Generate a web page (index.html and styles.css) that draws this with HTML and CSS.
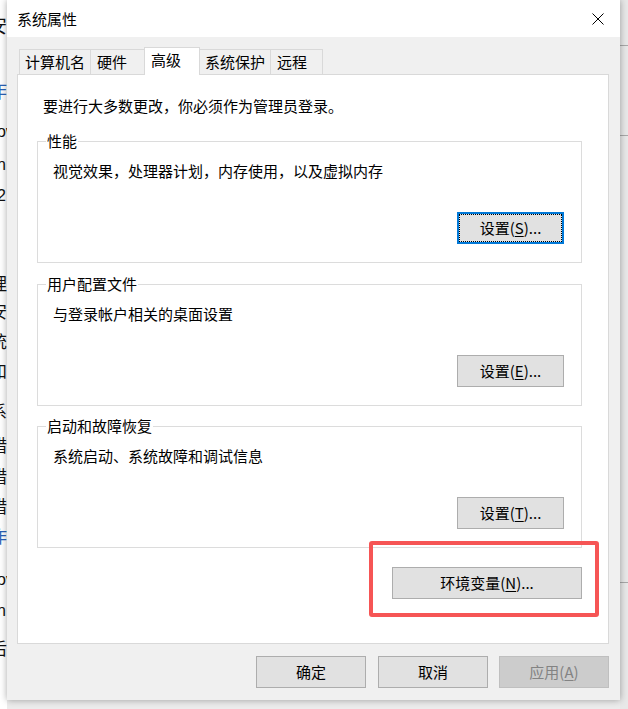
FILE: index.html
```html
<!DOCTYPE html>
<html lang="zh-CN">
<head>
<meta charset="utf-8">
<title>系统属性</title>
<link rel="stylesheet" href="styles.css">
</head>
<body>
<div class="screen">
  <div class="bgwin">
    <div class="frag f1 big">安</div>
    <div class="frag f2 big blue">作</div>
    <div class="frag f3 lat">ow</div>
    <div class="frag f4 lat">n</div>
    <div class="frag f5 lat">2</div>
    <div class="frag f6">理</div>
    <div class="frag f7">安</div>
    <div class="frag f8">统</div>
    <div class="frag f9">和</div>
    <div class="frag f10">系</div>
    <div class="frag f11">措</div>
    <div class="frag f12">措</div>
    <div class="frag f13">措</div>
    <div class="frag f14 blue">作</div>
    <div class="frag f15 lat">ov</div>
    <div class="frag f16 lat">n</div>
    <div class="frag f17">后</div>
  </div>

  <div class="dialog">
    <div class="titlebar">
      <span class="title">系统属性</span>
      <svg class="close" width="12" height="12" viewBox="0 0 12 12" aria-hidden="true">
        <path d="M0.5 0.5L11.5 11.5M11.5 0.5L0.5 11.5" stroke="#000" stroke-width="1" fill="none"/>
      </svg>
    </div>
    <div class="body">
      <div class="tabs">
        <div class="tab t1">计算机名</div>
        <div class="tab t2">硬件</div>
        <div class="tab sel">高级</div>
        <div class="tab t4">系统保护</div>
        <div class="tab t5">远程</div>
      </div>
      <div class="panel">
        <p class="intro">要进行大多数更改，你必须作为管理员登录。</p>

        <div class="group g1">
          <div class="legend">性能</div>
          <div class="desc">视觉效果，处理器计划，内存使用，以及虚拟内存</div>
          <div class="grow"><button class="btn focus">设置(<u>S</u>)...</button></div>
        </div>

        <div class="group">
          <div class="legend">用户配置文件</div>
          <div class="desc">与登录帐户相关的桌面设置</div>
          <div class="grow"><button class="btn">设置(<u>E</u>)...</button></div>
        </div>

        <div class="group g3">
          <div class="legend">启动和故障恢复</div>
          <div class="desc">系统启动、系统故障和调试信息</div>
          <div class="grow"><button class="btn">设置(<u>T</u>)...</button></div>
        </div>

        <div class="envrow"><button class="btn env">环境变量(<u>N</u>)...</button></div>
      </div>
      <div class="actions">
        <button class="btn act">确定</button>
        <button class="btn act a2">取消</button>
        <button class="btn act a3 disabled">应用(<u>A</u>)</button>
      </div>
    </div>
  </div>

  <div class="rstrip">
    <div class="rl r1"></div>
    <div class="rl r2"></div>
    <div class="rl r3"></div>
  </div>

  <div class="annot"></div>
</div>
</body>
</html>
```

FILE: styles.css
```css
* { box-sizing: border-box; }

html, body {
  margin: 0;
  padding: 0;
  background: #ececec;
}

body {
  font-family: "Noto Sans CJK SC", "Noto Sans", sans-serif;
  font-size: 15px;
  color: #000;
}

.screen {
  position: relative;
  display: flex;
  width: 628px;
  height: 709px;
  overflow: hidden;
  background: #ececec;
}

/* partially hidden window behind the dialog */
.bgwin {
  width: 7px;
  flex-shrink: 0;
  height: 709px;
  background: #fff;
  overflow: hidden;
}

.frag {
  height: 20px;
  line-height: 20px;
  font-size: 17px;
  white-space: nowrap;
  margin-left: -10px;
  color: #111;
}
.frag.big { font-size: 19px; margin-left: -12px; }
.frag.lat { font-family: "Liberation Sans", sans-serif; font-size: 16px; margin-left: -3px; }
.frag.blue { color: #2a62b6; }

.f1 { margin-top: 15px; }
.f2 { margin-top: 45px; }
.f3 { margin-top: 22px; }
.f4 { margin-top: 13px; }
.f5 { margin-top: 11px; }
.f6 { margin-top: 67px; }
.f7 { margin-top: 8px; }
.f8 { margin-top: 10px; }
.f9 { margin-top: 10px; }
.f10 { margin-top: 20px; }
.f11 { margin-top: 14px; }
.f12 { margin-top: 11px; }
.f13 { margin-top: 10px; }
.f14 { margin-top: 10px; }
.f15 { margin-top: 24px; }
.f16 { margin-top: 11px; }
.f17 { margin-top: 17px; }

/* dialog */
.dialog {
  position: relative;
  z-index: 2;
  width: 613px;
  height: 700px;
  flex-shrink: 0;
  background: #f0f0f0;
  box-shadow: 0 0 7px rgba(0, 0, 0, 0.35);
}

.titlebar {
  display: flex;
  align-items: center;
  height: 37px;
  background: #fff;
  padding-left: 10px;
}

.title {
  line-height: 37px;
  font-size: 15px;
}

.close {
  margin-left: auto;
  margin-right: 16px;
  display: block;
}

.body {
  padding: 0 12px 0 10px;
}

.tabs {
  display: flex;
  align-items: flex-end;
  margin-top: 10px;
  margin-left: 2px;
}

.tab {
  height: 25px;
  line-height: 24px;
  padding-left: 5px;
  background: #f0f0f0;
  border-top: 1px solid #d9d9d9;
  border-left: 1px solid #d9d9d9;
  white-space: nowrap;
}

.t1 { width: 71px; }
.t2 { width: 56px; padding-left: 6px; }
.t4 { width: 72px; padding-left: 6px; }
.t5 { width: 53px; padding-left: 6px; border-right: 1px solid #d9d9d9; }

.tab.sel {
  position: relative;
  z-index: 1;
  width: 56px;
  height: 28px;
  margin: 0 -2px -1px -2px;
  padding-left: 6px;
  background: #fff;
  border: 1px solid #d9d9d9;
  border-bottom: none;
}

.panel {
  width: 592px;
  height: 570px;
  background: #fff;
  border: 1px solid #d9d9d9;
}

.intro {
  margin: 0;
  padding: 21px 0 0 25px;
  line-height: 20px;
}

.group {
  width: 545px;
  margin: 21px 0 0 19px;
  border: 1px solid #dcdcdc;
  padding-bottom: 18px;
}
.group.g1 { margin-top: 25px; }
.group.g3 { margin-top: 20px; }

.legend {
  width: fit-content;
  margin: -11px 0 0 8px;
  padding: 0 1px;
  background: #fff;
  line-height: 20px;
}

.desc {
  margin-top: 10px;
  padding-left: 15px;
  line-height: 20px;
}

.grow {
  display: flex;
  justify-content: flex-end;
  margin-top: 31px;
  padding-right: 17px;
}

.btn {
  display: block;
  width: 107px;
  height: 32px;
  padding: 0;
  margin: 0;
  border: 1px solid #adadad;
  background: #e1e1e1;
  font-family: "Noto Sans CJK SC", "Noto Sans", sans-serif;
  font-size: 15px;
  line-height: 28px;
  color: #000;
  text-align: center;
}

.btn u { text-underline-offset: 2px; }

.btn.focus {
  border: 2px solid #0078d7;
  outline: 1px dotted #000;
  outline-offset: -3px;
}

.envrow {
  display: flex;
  justify-content: flex-end;
  margin-top: 19px;
  padding-right: 26px;
}

.btn.env { width: 190px; }

.actions {
  display: flex;
  justify-content: flex-end;
  margin-top: 12px;
  margin-right: -1px;
}

.btn.act { width: 110px; }
.btn.a2 { margin-left: 12px; }
.btn.a3 { margin-left: 11px; }

.btn.disabled {
  background: #cccccc;
  border-color: #bfbfbf;
  color: #838383;
}

/* right strip of background window */
.rstrip {
  flex: 1;
  height: 709px;
  background: #e8e8e8;
}
.rl { border-top: 1px solid #a8a8a8; }
.r1 { margin-top: 45px; }
.r2 { margin-top: 89px; }
.r3 { margin-top: 446px; }

/* red annotation rectangle drawn over the dialog */
.annot {
  position: absolute;
  z-index: 5;
  left: 369px;
  top: 541px;
  width: 230px;
  height: 76px;
  border: 4px solid #f65555;
  border-radius: 3px;
}
```
